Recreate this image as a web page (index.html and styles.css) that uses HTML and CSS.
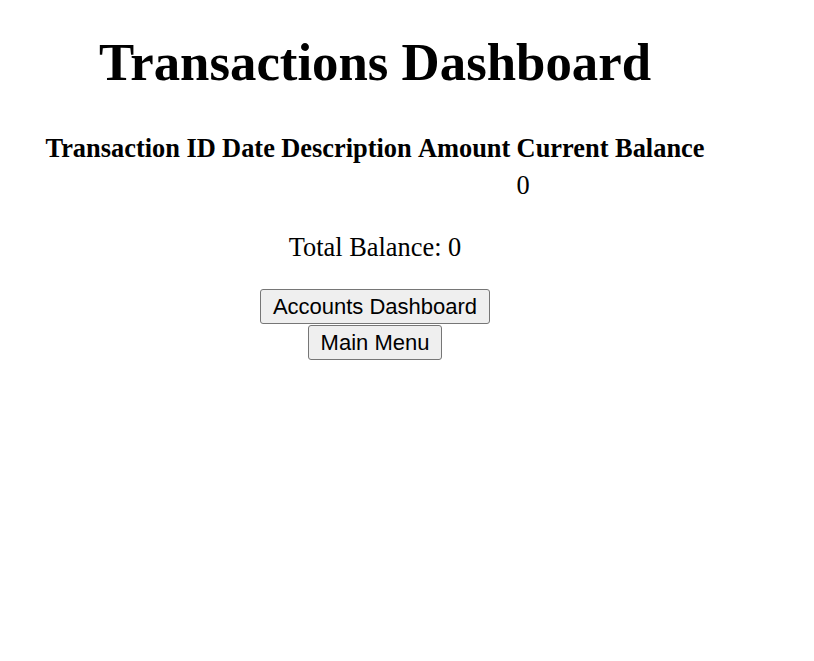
FILE: index.html
```html
<!DOCTYPE html>
<html>
<head>
<meta charset="utf-8">
<title>Transactions Dashboard</title>
<link rel="stylesheet" href="styles.css">
</head>
<body>
<div class="page">
  <h1 class="title">Transactions Dashboard</h1>
  <table class="tx-table">
    <thead>
      <tr>
        <th>Transaction ID</th>
        <th>Date</th>
        <th>Description</th>
        <th>Amount</th>
        <th>Current Balance</th>
      </tr>
    </thead>
    <tbody>
      <tr>
        <td></td>
        <td></td>
        <td></td>
        <td></td>
        <td>0</td>
      </tr>
    </tbody>
  </table>
  <p class="total">Total Balance: 0</p>
  <div class="actions">
    <button class="btn">Accounts Dashboard</button>
    <button class="btn">Main Menu</button>
  </div>
</div>
</body>
</html>
```
FILE: styles.css
```css
html, body {
  margin: 0;
  padding: 0;
  background: #ffffff;
}
body {
  font-family: "Liberation Serif", "Times New Roman", serif;
  font-size: 26.4px;
  color: #000000;
  padding: 0 13px;
}
.page {
  width: 724px;
  text-align: center;
  padding-top: 1px;
}
.title {
  font-size: 52.8px;
  font-weight: bold;
  line-height: normal;
  margin: 31px 0 36px;
}
.tx-table {
  margin: 0 auto;
  border-spacing: 3.3px;
  font-size: 26.4px;
}
.tx-table th {
  padding: 1.65px;
  font-weight: bold;
}
.tx-table td {
  padding: 1.65px;
  text-align: left;
}
.total {
  margin: 26.4px 0;
}
.actions {
  display: flex;
  flex-direction: column;
  align-items: center;
  gap: 1px;
}
.btn {
  font-family: "Liberation Sans", Arial, sans-serif;
  font-size: 22px;
  color: #000000;
  background: #efefef;
  border: 1px solid #767676;
  border-radius: 3px;
  padding: 3.5px 12px 3.5px;
  line-height: normal;
}
```
